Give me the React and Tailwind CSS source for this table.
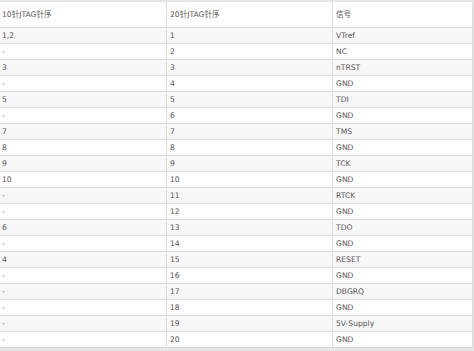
// JTAG 10-pin / 20-pin mapping table
const rows = [
  ['1,2', '1', 'VTref'],
  ['-', '2', 'NC'],
  ['3', '3', 'nTRST'],
  ['-', '4', 'GND'],
  ['5', '5', 'TDI'],
  ['-', '6', 'GND'],
  ['7', '7', 'TMS'],
  ['8', '8', 'GND'],
  ['9', '9', 'TCK'],
  ['10', '10', 'GND'],
  ['-', '11', 'RTCK'],
  ['-', '12', 'GND'],
  ['6', '13', 'TDO'],
  ['-', '14', 'GND'],
  ['4', '15', 'RESET'],
  ['-', '16', 'GND'],
  ['-', '17', 'DBGRQ'],
  ['-', '18', 'GND'],
  ['-', '19', '5V-Supply'],
  ['-', '20', 'GND'],
];

const font = { fontFamily: '"DejaVu Sans", "Noto Sans CJK SC", sans-serif' };

export default function App() {
  return (
    <div className="w-[474px] h-[351px] bg-[#e6e6e6] pt-[2px] overflow-hidden">
      <div
        className="w-[473px] bg-white border-r border-[#dcdcdc] text-[7.6px] text-[#5b5358]"
        style={font}
      >
        {/* Header */}
        <div className="flex h-[26px] border-b border-[#dcdcdc]">
          <div className="w-[167px] shrink-0 flex items-center pl-[2px] border-r border-[#dcdcdc]">10针JTAG针序</div>
          <div className="w-[166px] shrink-0 flex items-center pl-[3px] border-r border-[#dcdcdc]">20针JTAG针序</div>
          <div className="flex-1 flex items-center pl-[3px]">信号</div>
        </div>

        {/* Rows */}
        {rows.map((r, i) => (
          <div
            key={i}
            className={`flex h-[16px] border-b border-[#dcdcdc] ${i % 2 === 0 ? 'bg-[#f7f7f7]' : 'bg-white'}`}
          >
            <div className="w-[167px] shrink-0 flex items-center pl-[2px] border-r border-[#dcdcdc]">{r[0]}</div>
            <div className="w-[166px] shrink-0 flex items-center pl-[3px] border-r border-[#dcdcdc]">{r[1]}</div>
            <div className="flex-1 flex items-center pl-[3px]">{r[2]}</div>
          </div>
        ))}
      </div>
    </div>
  );
}
